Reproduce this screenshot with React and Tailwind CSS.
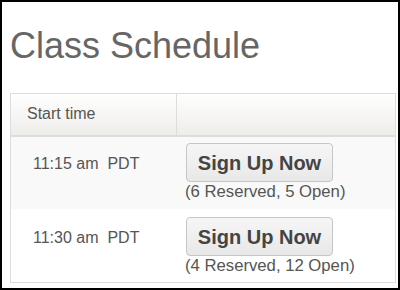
import React from "react";

const rows = [
  { time: "11:15 am", note: "(6 Reserved, 5 Open)", bg: "bg-[#f9f9f9]", btnPad: "pt-[6px]", timePad: "pt-[15px]", h: "h-[72px]" },
  { time: "11:30 am", note: "(4 Reserved, 12 Open)", bg: "bg-white", btnPad: "pt-[8px]", timePad: "pt-[17px]", h: "h-[73px]" },
];

export default function App() {
  return (
    <div
      className="w-[400px] h-[290px] border-2 border-black bg-white overflow-hidden box-border"
      style={{ fontFamily: '"Liberation Sans", Arial, sans-serif' }}
    >
      <h1 className="text-[36px] leading-none text-[#666] pl-[8px] pt-[26px] font-normal">
        Class Schedule
      </h1>
      <div className="ml-[8px] mt-[29px] w-[386px] border border-[#dddddd]">
        <div className="flex h-[43px] border-b-2 border-[#dddddd] bg-gradient-to-b from-white to-[#efedea]">
          <div className="w-[166px] border-r border-[#dddddd] flex items-center pl-[16px] pb-[1px] text-[16px] text-[#555]">
            Start time
          </div>
          <div className="flex-1" />
        </div>
        {rows.map((r, i) => (
          <div key={i} className={`flex ${r.h} ${r.bg}`}>
            <div className={`w-[166px] pl-[22px] ${r.timePad} text-[16px] text-[#555] whitespace-pre`}>
              {r.time + "  PDT"}
            </div>
            <div className={`flex-1 pl-[9px] ${r.btnPad}`}>
              <button className="h-[39px] w-[147px] rounded-[4px] border border-[#c6c6c6] bg-gradient-to-b from-[#f6f6f6] to-[#e8e8e8] text-[20px] font-bold text-[#444] leading-none">
                Sign Up Now
              </button>
              <div className="text-[16.7px] text-[#555] leading-[19px] -ml-[1px]">
                {r.note}
              </div>
            </div>
          </div>
        ))}
      </div>
    </div>
  );
}
